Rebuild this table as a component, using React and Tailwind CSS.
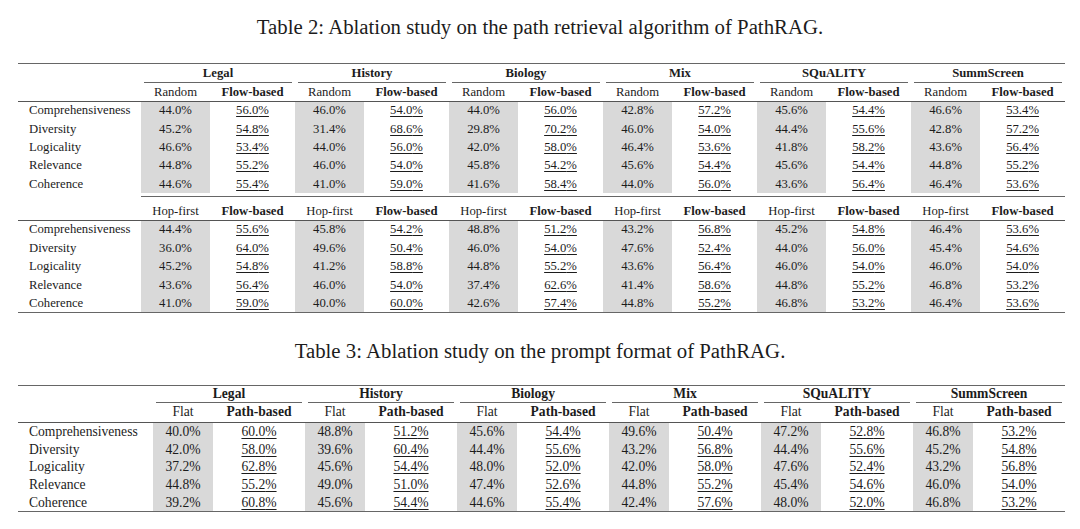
import React from "react";

const groups = ["Legal", "History", "Biology", "Mix", "SQuALITY", "SummScreen"];
const metrics = ["Comprehensiveness", "Diversity", "Logicality", "Relevance", "Coherence"];

// each row: [base, ours] pairs per dataset
const t2a = [
  ["44.0", "56.0", "46.0", "54.0", "44.0", "56.0", "42.8", "57.2", "45.6", "54.4", "46.6", "53.4"],
  ["45.2", "54.8", "31.4", "68.6", "29.8", "70.2", "46.0", "54.0", "44.4", "55.6", "42.8", "57.2"],
  ["46.6", "53.4", "44.0", "56.0", "42.0", "58.0", "46.4", "53.6", "41.8", "58.2", "43.6", "56.4"],
  ["44.8", "55.2", "46.0", "54.0", "45.8", "54.2", "45.6", "54.4", "45.6", "54.4", "44.8", "55.2"],
  ["44.6", "55.4", "41.0", "59.0", "41.6", "58.4", "44.0", "56.0", "43.6", "56.4", "46.4", "53.6"],
];

const t2b = [
  ["44.4", "55.6", "45.8", "54.2", "48.8", "51.2", "43.2", "56.8", "45.2", "54.8", "46.4", "53.6"],
  ["36.0", "64.0", "49.6", "50.4", "46.0", "54.0", "47.6", "52.4", "44.0", "56.0", "45.4", "54.6"],
  ["45.2", "54.8", "41.2", "58.8", "44.8", "55.2", "43.6", "56.4", "46.0", "54.0", "46.0", "54.0"],
  ["43.6", "56.4", "46.0", "54.0", "37.4", "62.6", "41.4", "58.6", "44.8", "55.2", "46.8", "53.2"],
  ["41.0", "59.0", "40.0", "60.0", "42.6", "57.4", "44.8", "55.2", "46.8", "53.2", "46.4", "53.6"],
];

const t3 = [
  ["40.0", "60.0", "48.8", "51.2", "45.6", "54.4", "49.6", "50.4", "47.2", "52.8", "46.8", "53.2"],
  ["42.0", "58.0", "39.6", "60.4", "44.4", "55.6", "43.2", "56.8", "44.4", "55.6", "45.2", "54.8"],
  ["37.2", "62.8", "45.6", "54.4", "48.0", "52.0", "42.0", "58.0", "47.6", "52.4", "43.2", "56.8"],
  ["44.8", "55.2", "49.0", "51.0", "47.4", "52.6", "44.8", "55.2", "45.4", "54.6", "46.0", "54.0"],
  ["39.2", "60.8", "45.6", "54.4", "44.6", "55.4", "42.4", "57.6", "48.0", "52.0", "46.8", "53.2"],
];

function DataRows({ rows, h }) {
  return rows.map((r, i) => (
    <tr key={metrics[i]} className={h}>
      <td className="p-0 pl-[11px] text-left whitespace-nowrap">{metrics[i]}</td>
      {r.map((v, j) =>
        j % 2 === 0 ? (
          <td key={j} className="p-0 bg-[#d9d9d9] text-center">{v}%</td>
        ) : (
          <td key={j} className="p-0 text-center">
            <span className="underline underline-offset-[2px] decoration-[1px]">{v}%</span>
          </td>
        )
      )}
    </tr>
  ));
}

function GroupHeader({ h }) {
  return (
    <tr className={h}>
      <th className="p-0" />
      {groups.map((g) => (
        <th key={g} colSpan={2} className="p-0 align-bottom font-bold">
          <div className="mx-[3px] border-b border-[#666] pb-[1px]">{g}</div>
        </th>
      ))}
    </tr>
  );
}

function SubHeader({ a, b, h, pb = "pb-[1px]" }) {
  return (
    <tr className={`${h} border-b border-[#555]`}>
      <th className="p-0" />
      {groups.map((g) => (
        <React.Fragment key={g}>
          <th className={`p-0 font-normal text-center align-bottom ${pb}`}>{a}</th>
          <th className={`p-0 font-bold text-center align-bottom ${pb}`}>{b}</th>
        </React.Fragment>
      ))}
    </tr>
  );
}

function Cols({ label, base, ours }) {
  return (
    <colgroup>
      <col style={{ width: label }} />
      {groups.map((g) => (
        <React.Fragment key={g}>
          <col style={{ width: base }} />
          <col style={{ width: ours }} />
        </React.Fragment>
      ))}
    </colgroup>
  );
}

export default function App() {
  return (
    <div
      className="w-[1080px] h-[529px] bg-white text-[#1c1c1c] overflow-hidden"
      style={{ fontFamily: '"Liberation Serif", "Times New Roman", serif' }}
    >
      {/* Table 2 */}
      <div className="pt-[15px] text-center text-[20.8px] leading-[24px]">
        Table 2: Ablation study on the path retrieval algorithm of PathRAG.
      </div>
      <div className="mt-[24px] ml-[18px]">
        <table className="table-fixed border-collapse w-[1047px] text-[12.7px] leading-[15px] border-t-[1.5px] border-b-[1.5px] border-[#666]">
          <Cols label={123} base={69} ours={85} />
          <tbody>
            <GroupHeader h="h-[19px]" />
            <SubHeader a="Random" b="Flow-based" h="h-[19px]" />
            <DataRows rows={t2a} h="h-[18.4px]" />
            <tr className="h-[3px]">
              <td className="p-0" />
              <td colSpan={12} className="border-b border-[#666] p-0" />
            </tr>
            <SubHeader a="Hop-first" b="Flow-based" h="h-[24px]" />
            <DataRows rows={t2b} h="h-[18.5px]" />
          </tbody>
        </table>
      </div>

      {/* Table 3 */}
      <div className="mt-[26px] text-center text-[20.8px] leading-[24px]">
        Table 3: Ablation study on the prompt format of PathRAG.
      </div>
      <div className="mt-[22px] ml-[18px]">
        <table className="table-fixed border-collapse w-[1047px] text-[13.6px] leading-[15px] border-t-[1.5px] border-b-[1.5px] border-[#666]">
          <Cols label={135} base={60} ours={92} />
          <tbody>
            <GroupHeader h="h-[16px]" />
            <SubHeader a="Flat" b="Path-based" h="h-[19px]" pb="pb-[3px]" />
            <DataRows rows={t3} h="h-[17.8px]" />
          </tbody>
        </table>
      </div>
    </div>
  );
}
